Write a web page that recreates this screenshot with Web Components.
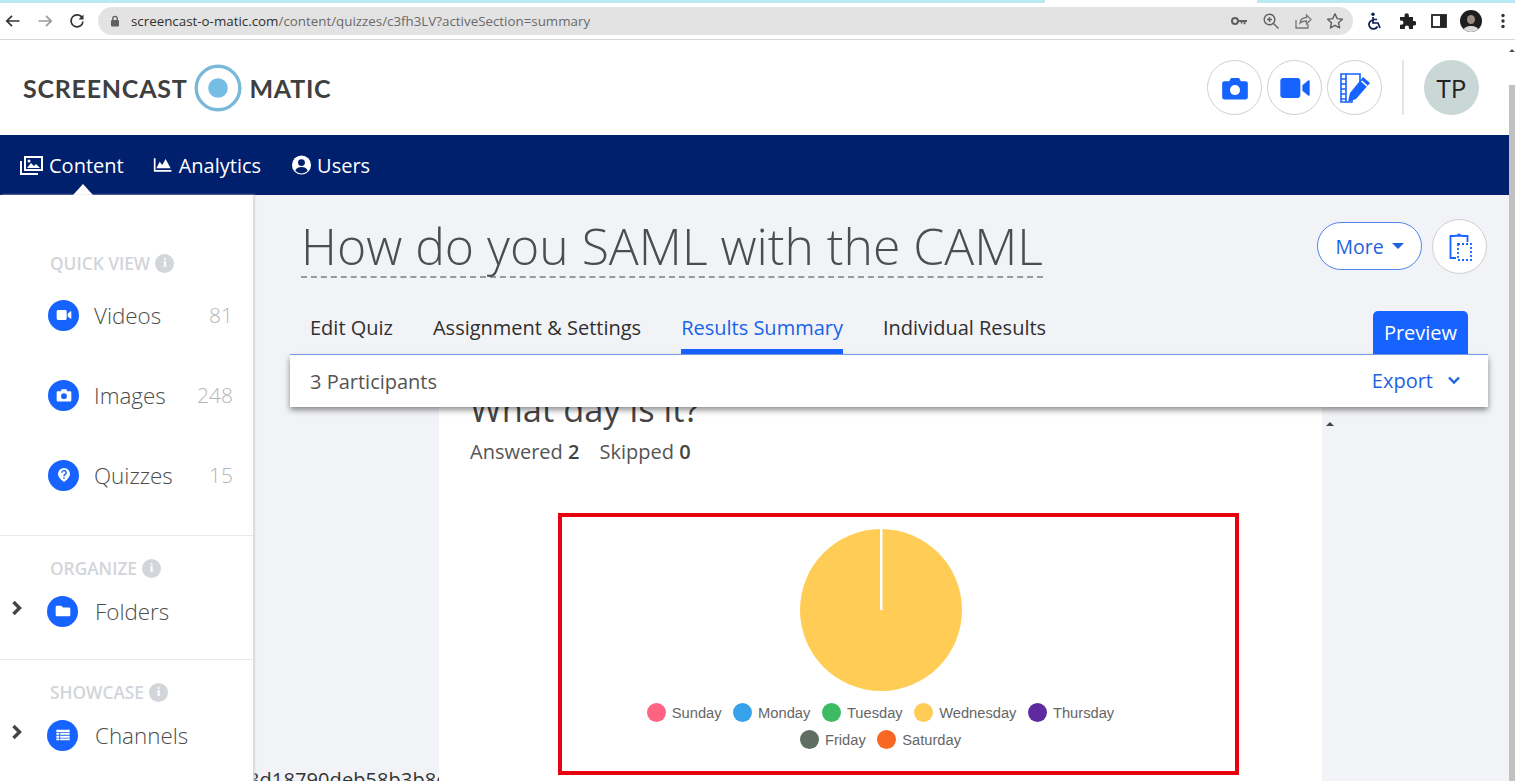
<!DOCTYPE html>
<html>
<head>
<meta charset="utf-8">
<title>How do you SAML with the CAML</title>
<style>
html, body {
  margin: 0;
  height: 781px;
  overflow: hidden;
  background: #fff;
  font-family: "Open Sans", sans-serif;
}
body {
  display: flex;
  flex-direction: column;
}
.page {
  flex: 1;
  display: flex;
  min-height: 0;
}
.page-inner {
  flex: 1;
  min-width: 0;
  display: flex;
  flex-direction: column;
}
.work {
  flex: 1;
  display: flex;
  min-height: 0;
}
</style>
</head>
<body>
<browser-bar></browser-bar>
<div class="page">
  <div class="page-inner">
    <site-header></site-header>
    <site-nav></site-nav>
    <div class="work">
      <side-bar></side-bar>
      <quiz-main></quiz-main>
    </div>
  </div>
  <page-scrollbar></page-scrollbar>
</div>

<script>
var icons = {
  camera: `<svg viewBox="0 0 24 24"><path fill="currentColor" d="M8.500 3.500h7l1.500 2.700h4.200A1.800 1.800 0 0 1 23 8v12a1.800 1.800 0 0 1-1.800 1.800H2.800A1.800 1.800 0 0 1 1 20V8a1.800 1.800 0 0 1 1.800-1.800H7z"/><circle cx="12" cy="13.800" r="4.300" fill="var(--cut,#fff)"/></svg>`,
  video: `<svg viewBox="0 0 24 24"><rect x="1" y="4.500" width="15" height="15" rx="2.200" fill="currentColor"/><path fill="currentColor" d="M17.500 10l4.300-3.600c.5-.4 1.200 0 1.200.6v10c0 .6-.7 1-1.200.6L17.500 14z"/></svg>`,
  quiz: `<svg viewBox="0 0 24 24"><path fill="currentColor" d="M12 1.500a9 9 0 0 0-9 9c0 4.600 5.500 9.800 9 12 3.500-2.200 9-7.400 9-12a9 9 0 0 0-9-9z"/><path fill="none" stroke="var(--cut,#fff)" stroke-width="2.200" d="M8.800 8.600a3.200 3.200 0 1 1 4.600 2.900c-1 .5-1.400 1-1.400 2.200"/><circle cx="12" cy="16.500" r="1.300" fill="var(--cut,#fff)"/></svg>`,
  folder: `<svg viewBox="0 0 24 24"><path fill="currentColor" d="M3 4h6.500l2.500 2.800h9A2 2 0 0 1 23 8.800V18a2 2 0 0 1-2 2H3a2 2 0 0 1-2-2V6a2 2 0 0 1 2-2z"/></svg>`,
  list: `<svg viewBox="0 0 24 24"><path fill="currentColor" d="M2 4h20v3.500H2zM2 8.800h4.500v3H2zM7.800 8.800H22v3H7.800zM2 13h4.500v3H2zM7.800 13H22v3H7.800zM2 17.200h4.500V20H2zM7.800 17.200H22V20H7.800z"/></svg>`
};

// plain icon wrapper, the name picks from the table above
class SvgIcon extends HTMLElement {
  constructor() {
    super();
    var size = this.getAttribute("size") || 16;
    var root = this.attachShadow({ mode: "open" });
    root.innerHTML = `
<style>
:host { display: inline-flex; width: ${size}px; height: ${size}px; flex: none; }
svg { width: 100%; height: 100%; display: block; }
</style>${icons[this.getAttribute("name")] || ""}`;
  }
}
customElements.define("svg-icon", SvgIcon);

class BrowserBar extends HTMLElement {
  constructor() {
    super();
    this.attachShadow({ mode: "open" }).innerHTML = `
<style>
:host { display: block; flex: none; height: 40px; background: #fff; box-sizing: border-box; border-bottom: 1px solid #d8d8d8; }
.strip { display: flex; height: 3px; }
.strip i { display: block; background: #b9e9f3; }
.toolbar { display: flex; align-items: center; height: 32px; margin-top: 2px; }
.nav { display: flex; width: 98px; flex: none; }
.nav svg { width: 18px; height: 18px; display: block; }
.nav span { width: 32px; display: flex; justify-content: center; }
.nav span:first-child { margin-left: -3px; }
.omni { width: 1255px; height: 28px; flex: none; background: #e3e3e3; border-radius: 14px; display: flex; align-items: center; box-sizing: border-box; padding-left: 12px; font: 13.350px "Open Sans", sans-serif; color: #6a6a6a; }
.omni svg { display: block; }
.omni b { font-weight: 400; color: #303030; }
.url { margin-left: 11px; white-space: nowrap; flex: 1; }
.tools { display: flex; align-items: center; gap: 14px; padding-right: 9px; }
.tools svg { width: 18px; height: 18px; display: block; }
.ext { display: flex; align-items: center; }
.ext > * { width: 32px; display: flex; justify-content: center; }
.ext svg { width: 18px; height: 18px; display: block; }
.ext { margin-left: 6px; }
.face { width: 22px; height: 22px; border-radius: 50%; background: #1e1e1e; position: relative; overflow: hidden; display: block; }
.face::after { content: ""; position: absolute; left: 3px; right: 3px; bottom: -4px; height: 10px; border-radius: 50%; background: #d8d8d8; }
.face::before { content: ""; position: absolute; left: 7px; top: 5px; width: 8px; height: 9px; border-radius: 50%; background: #9a8c80; }
</style>
<div class="strip"><i style="width:1045px"></i><span style="width:212px"></span><i style="flex:1"></i></div>
<div class="toolbar">
  <div class="nav">
    <span><svg viewBox="0 0 18 18"><path fill="none" stroke="#333" stroke-width="1.700" d="M15.500 9H3M8 3.800L2.800 9 8 14.200"/></svg></span>
    <span><svg viewBox="0 0 18 18"><path fill="none" stroke="#9a9a9a" stroke-width="1.700" d="M2.500 9H15M10 3.800L15.200 9 10 14.200"/></svg></span>
    <span><svg viewBox="0 0 18 18"><path fill="none" stroke="#333" stroke-width="1.700" d="M14.300 6A6 6 0 1 0 15 9.500"/><path fill="#333" d="M15.500 2.500v5h-5z"/></svg></span>
  </div>
  <div class="omni">
    <svg width="10" height="12" viewBox="0 0 10 12"><rect x="1" y="5" width="8" height="6.500" rx="1" fill="#5f5f5f"/><path fill="none" stroke="#5f5f5f" stroke-width="1.300" d="M2.800 5.500V3.500a2.200 2.200 0 0 1 4.400 0v2"/></svg>
    <span class="url"><b>screencast-o-matic.com</b>/content/quizzes/c3fh3LV?activeSection=summary</span>
    <div class="tools">
      <svg viewBox="0 0 18 18"><circle cx="5" cy="9" r="3" fill="none" stroke="#5f5f5f" stroke-width="2"/><path fill="#5f5f5f" d="M8 8h9v2h-1.500v2.200h-1.800V10h-1.200v1.500h-1.800V10H8z"/></svg>
      <svg viewBox="0 0 18 18"><circle cx="7.500" cy="7.500" r="5.300" fill="none" stroke="#5f5f5f" stroke-width="1.400"/><path stroke="#5f5f5f" stroke-width="1.400" fill="none" d="M11.500 11.500l5 5M7.500 5v5M5 7.500h5"/></svg>
      <svg viewBox="0 0 18 18"><path fill="none" stroke="#777" stroke-width="1.300" d="M2 8v8h12v-4M6 11c.5-3.500 3-5.500 6.500-5.500V3l4.500 4.500-4.500 4.500V9c-3 0-5 .5-6.500 2z"/></svg>
      <svg viewBox="0 0 18 18"><path fill="none" stroke="#5f5f5f" stroke-width="1.400" stroke-linejoin="round" d="M9 1.800l2.200 4.800 5.200.6-3.900 3.500 1.100 5.200L9 13.300l-4.600 2.600 1.100-5.200-3.900-3.500 5.200-.6z"/></svg>
    </div>
  </div>
  <div class="ext">
    <span><svg viewBox="0 0 18 18"><circle cx="7" cy="2.300" r="1.700" fill="#0b1a52"/><path fill="none" stroke="#0b1a52" stroke-width="1.700" d="M7 5v6h5l2 5M6 8.200a4.500 4.500 0 1 0 5.500 6.300M7 7.500h4"/></svg></span>
    <span><svg viewBox="0 0 18 18"><path fill="#222" d="M6.500 3.500a2.200 2.200 0 1 1 4.400 0V5H15v4h1.200a2.200 2.200 0 1 1 0 4.400H15V17h-4v-1.300a2.100 2.100 0 1 0-4.200 0V17H2v-4.200h1.300a2.200 2.200 0 1 0 0-4.400H2V5h4.500z"/></svg></span>
    <span><svg viewBox="0 0 18 18"><rect x="2" y="3" width="14" height="12" fill="none" stroke="#222" stroke-width="1.800"/><rect x="10" y="3" width="6" height="12" fill="#222"/></svg></span>
    <span><i class="face"></i></span>
    <span><svg viewBox="0 0 18 18"><circle cx="9" cy="3.500" r="1.700" fill="#333"/><circle cx="9" cy="9" r="1.700" fill="#333"/><circle cx="9" cy="14.500" r="1.700" fill="#333"/></svg></span>
  </div>
</div>`;
  }
}
customElements.define("browser-bar", BrowserBar);

class SiteHeader extends HTMLElement {
  constructor() {
    super();
    this.attachShadow({ mode: "open" }).innerHTML = `
<style>
:host { display: flex; flex: none; height: 95px; align-items: center; background: #fff; padding: 0 30px 0 23px; box-sizing: border-box; }
.logo { display: flex; align-items: center; gap: 7px; font: 700 25px Lato, sans-serif; color: #3f3f3f; letter-spacing: .75px; }
.logo svg { width: 48px; height: 48px; display: block; }
.actions { margin-left: auto; display: flex; align-items: center; gap: 5px; }
.round { width: 55px; height: 55px; box-sizing: border-box; border: 1px solid #cfcfcf; border-radius: 50%; display: flex; align-items: center; justify-content: center; background: #fff; color: #1763ff; }
.sep { width: 2px; height: 55px; background: #e4e6e6; margin: 0 15px; }
.avatar { width: 55px; height: 55px; border-radius: 50%; background: #c9d8d6; color: #222; display: flex; align-items: center; justify-content: center; font: 400 26px "Open Sans", sans-serif; }
</style>
<div class="logo">
  <span>SCREENCAST</span>
  <svg viewBox="0 0 48 48"><circle cx="24" cy="24" r="21.800" fill="none" stroke="#79b8d9" stroke-width="3.400"/><circle cx="24" cy="24" r="9.800" fill="#76bde6"/></svg>
  <span>MATIC</span>
</div>
<div class="actions">
  <div class="round"><svg-icon name="camera" size="28"></svg-icon></div>
  <div class="round"><svg-icon name="video" size="32"></svg-icon></div>
  <div class="round">
    <svg width="34" height="34" viewBox="0 0 34 34"><path fill="none" stroke="#1763ff" stroke-width="1.600" d="M3 3h19v10l-8 9v9H3zM8 3v28M3 8h5M3 13h5M3 18h5M3 23h5M3 28h5"/><path fill="#1763ff" d="M25 6l7 6-14 16-8 3 2-9z"/><path fill="#fff" d="M23 10.500l1.200-1 5.500 5-1 1.200z"/></svg>
  </div>
  <div class="sep"></div>
  <div class="avatar">TP</div>
</div>`;
  }
}
customElements.define("site-header", SiteHeader);

class SiteNav extends HTMLElement {
  constructor() {
    super();
    this.attachShadow({ mode: "open" }).innerHTML = `
<style>
:host { display: flex; flex: none; height: 60px; background: #001f6d; color: #fff; align-items: center; padding-left: 19px; gap: 29px; font: 400 20px "Open Sans", sans-serif; position: relative; }
a { display: flex; align-items: center; gap: 5px; }
svg { display: block; width: 25px; height: 22px; }
.notch { position: absolute; left: 73px; bottom: 0; width: 0; height: 0; border: 10px solid transparent; border-top: 0; border-bottom: 11px solid #fff; }
</style>
<a><svg viewBox="0 0 25 22"><path fill="none" stroke="#fff" stroke-width="2" d="M6 3h17v13H6zM2 7v13h17"/><path fill="#fff" d="M8 14l4-5 3 3 2-2 4 4z"/><circle cx="10" cy="7" r="1.500" fill="#fff"/></svg>Content</a>
<a><svg viewBox="0 0 25 22" style="width:21px"><path fill="#fff" d="M1 3h2v14h19v2H1zM4 15l4-8 3 4 4-7 6 11z"/></svg>Analytics</a>
<a style="margin-left:1px"><svg viewBox="0 0 22 22" style="width:21px"><circle cx="11" cy="11" r="10" fill="#fff"/><circle cx="11" cy="8.500" r="3.600" fill="#001f6d"/><path fill="#001f6d" d="M4.500 17c1-3 3.500-4 6.500-4s5.500 1 6.500 4a9 9 0 0 1-13 0z"/></svg>Users</a>
<i class="notch"></i>`;
  }
}
customElements.define("site-nav", SiteNav);

class SideSection extends HTMLElement {
  constructor() {
    super();
    this.attachShadow({ mode: "open" }).innerHTML = `
<style>
:host { display: block; box-sizing: border-box; padding-left: 50px; height: var(--h, 124px); padding-top: var(--pt, 21px); border-bottom: var(--bb, 1px solid #e9e9ec); }
.head { display: flex; align-items: center; gap: 5px; height: 24px; font: 600 17.300px "Open Sans", sans-serif; color: #d2d5d9; }
.info { width: 19px; height: 19px; border-radius: 50%; background: #d2d5d9; color: #fff; font: 700 13px "Liberation Serif", serif; display: flex; align-items: center; justify-content: center; }
</style>
<div class="head"><span>${this.getAttribute("label")}</span><span class="info">i</span></div>
<slot></slot>`;
  }
}
customElements.define("side-section", SideSection);

class SideItem extends HTMLElement {
  constructor() {
    super();
    var count = this.getAttribute("count");
    var caret = this.hasAttribute("caret");
    this.attachShadow({ mode: "open" }).innerHTML = `
<style>
:host { display: flex; align-items: center; height: 80px; font: 300 22.400px "Open Sans", sans-serif; color: #4c4c4c; position: relative; margin-left: var(--ml, -2px); }
.dot { width: 31px; height: 31px; border-radius: 50%; background: #1763ff; color: #fff; display: flex; align-items: center; justify-content: center; --cut: #1763ff; margin-right: var(--dm, 15px); flex: none; }
.count { margin-left: auto; margin-right: 20px; color: #b5b5b5; font-size: 21px; }
.caret { position: absolute; left: -36px; top: 50%; margin-top: -11px; }
</style>
${caret ? `<svg class="caret" width="12" height="16" viewBox="0 0 12 16"><path fill="none" stroke="#444" stroke-width="3.400" d="M2.500 2l6 6-6 6"/></svg>` : ""}
<span class="dot"><svg-icon name="${this.getAttribute("icon")}" size="16"></svg-icon></span>
<span>${this.getAttribute("label")}</span>
${count ? `<span class="count">${count}</span>` : ""}`;
  }
}
customElements.define("side-item", SideItem);

class SideBar extends HTMLElement {
  constructor() {
    super();
    this.attachShadow({ mode: "open" }).innerHTML = `
<style>
:host { display: block; flex: none; width: 253px; background: #fff; box-shadow: 2px 0 2px #d8d9dc; position: relative; z-index: 3; overflow: hidden; }
.quick { --h: 341px; --pt: 56px; }
.org { --pt: 20px; --ml: -3px; --dm: 17px; }
.show { --bb: none; --ml: -3px; --dm: 17px; --pt: 20px; }
.org side-item, .show side-item { height: 60px; margin-top: 1px; }
</style>
<side-section class="quick" label="QUICK VIEW">
  <side-item icon="video" label="Videos" count="81"></side-item>
  <side-item icon="camera" label="Images" count="248"></side-item>
  <side-item icon="quiz" label="Quizzes" count="15"></side-item>
</side-section>
<side-section class="org" label="ORGANIZE">
  <side-item icon="folder" label="Folders" caret></side-item>
</side-section>
<side-section class="show" label="SHOWCASE">
  <side-item icon="list" label="Channels" caret></side-item>
</side-section>`;
  }
}
customElements.define("side-bar", SideBar);

class TabStrip extends HTMLElement {
  constructor() {
    super();
    this.attachShadow({ mode: "open" }).innerHTML = `
<style>
:host { display: flex; align-items: flex-end; height: 45px; box-sizing: content-box; border-bottom: 1px solid #7ba4ee; padding-left: 20px; font: 400 20px "Open Sans", sans-serif; color: #2f2f2f; }
.tab { height: 40px; box-sizing: border-box; margin-right: 40px; white-space: nowrap; line-height: 27px; }
.on { color: #1763e8; border-bottom: 5px solid #1763ff; }
.preview { margin-left: auto; margin-right: 20px; width: 95px; height: 43px; box-sizing: border-box; background: #1763ff; color: #fff; border-radius: 5px 5px 0 0; text-align: center; line-height: 43px; }
</style>
<div class="tab">Edit Quiz</div>
<div class="tab">Assignment &amp; Settings</div>
<div class="tab on">Results Summary</div>
<div class="tab">Individual Results</div>
<div class="preview">Preview</div>`;
  }
}
customElements.define("tab-strip", TabStrip);

class LegendItem extends HTMLElement {
  constructor() {
    super();
    this.attachShadow({ mode: "open" }).innerHTML = `
<style>
:host { display: inline-flex; align-items: center; gap: 6px; height: 19px; font: 14.700px "Liberation Sans", sans-serif; color: #666; }
i { width: 19px; height: 19px; border-radius: 50%; background: ${this.getAttribute("color")}; display: block; }
</style>
<i></i><slot></slot>`;
  }
}
customElements.define("legend-item", LegendItem);

class PieChart extends HTMLElement {
  constructor() {
    super();
    this.attachShadow({ mode: "open" }).innerHTML = `
<style>
:host { display: block; width: 681px; height: 262px; box-sizing: border-box; border: 4px solid #e8000f; padding: 12px 36px 0 0; }
svg { display: block; margin: 0 auto; width: 162px; height: 162px; }
.legend { display: flex; flex-direction: column; gap: 8px; margin-top: 12px; }
.row { display: flex; justify-content: center; gap: 11.500px; }
</style>
<svg viewBox="0 0 162 162"><circle cx="81" cy="81" r="81" fill="#ffcd56"/><rect x="80" y="0" width="2.500" height="81" fill="#fff"/></svg>
<div class="legend">
  <div class="row">
    <legend-item color="#ff6384">Sunday</legend-item>
    <legend-item color="#36a2eb">Monday</legend-item>
    <legend-item color="#3cba64">Tuesday</legend-item>
    <legend-item color="#ffcd56">Wednesday</legend-item>
    <legend-item color="#5f2a9d">Thursday</legend-item>
  </div>
  <div class="row">
    <legend-item color="#5e6e60">Friday</legend-item>
    <legend-item color="#f96724">Saturday</legend-item>
  </div>
</div>`;
  }
}
customElements.define("pie-chart", PieChart);

class QuizMain extends HTMLElement {
  constructor() {
    super();
    this.attachShadow({ mode: "open" }).innerHTML = `
<style>
:host { flex: 1; min-width: 0; display: flex; flex-direction: column; background: #f2f3f7; overflow: hidden; position: relative; }
.top { display: flex; align-items: flex-start; height: 114px; flex: none; padding: 0 22px 0 48px; box-sizing: border-box; }
h1 { margin: 22px 0 0; font: 300 49.900px/58px "Open Sans", sans-serif; color: #4a4d52; border-bottom: 2px dashed #9a9a9a; white-space: nowrap; height: 59px; }
.btns { margin-left: auto; display: flex; align-items: center; gap: 10px; margin-top: 24px; }
.more { width: 105px; height: 48px; margin-top: -1px; box-sizing: border-box; border: 1px solid #4f86ea; border-radius: 24px; background: #fff; color: #1f62e0; display: flex; align-items: center; justify-content: center; gap: 8px; font-size: 19.500px; }
.more i { width: 0; height: 0; border: 6px solid transparent; border-top: 6px solid #1f62e0; border-bottom: 0; }
.clip { width: 55px; height: 55px; box-sizing: border-box; border: 1px solid #cfcfcf; border-radius: 50%; background: #fff; display: flex; align-items: center; justify-content: center; }
.tabs { margin: 0 21px 0 37px; flex: none; }
.bar { margin: 0 21px 0 37px; height: 52px; flex: none; background: #fff; box-shadow: 0 3px 6px rgba(0,0,0,.45); display: flex; align-items: center; justify-content: space-between; padding: 0 27px 0 20px; font-size: 20px; color: #555; position: relative; z-index: 2; }
.export { color: #1f62e0; display: flex; align-items: center; gap: 14px; margin-top: -2px; }
.lower { flex: 1; display: flex; min-height: 0; }
.cut { width: 186px; flex: none; display: flex; flex-direction: column; justify-content: flex-end; overflow: hidden; }
.cut span { font-size: 20px; line-height: 20px; color: #333; white-space: nowrap; margin-left: -5px; margin-bottom: -9px; letter-spacing: .1px; }
.card { width: 883px; flex: none; background: #fff; box-sizing: border-box; padding: 0 0 0 31px; overflow: hidden; }
.q { font-size: 34.400px; line-height: 34px; color: #444; margin-top: -15px; white-space: nowrap; }
.counts { font-size: 20px; line-height: 26px; color: #555; margin-top: 13px; display: flex; gap: 20px; }
.counts b { font-weight: 600; color: #444; }
pie-chart { margin: 48px 0 0 88px; }
.rail { width: 16px; flex: none; display: flex; justify-content: center; padding-top: 15px; box-sizing: border-box; }
.rail i { width: 0; height: 0; border: 4px solid transparent; border-top: 0; border-bottom: 4px solid #444; }
</style>
<div class="top">
  <h1>How do you SAML with the CAML</h1>
  <div class="btns">
    <div class="more">More <i></i></div>
    <div class="clip"><svg width="26" height="30" viewBox="0 0 26 30"><path fill="none" stroke="#1763ff" stroke-width="1.800" d="M8 4H3.500v22H9"/><path fill="none" stroke="#1763ff" stroke-width="1.800" d="M16 4h4.500v6"/><path fill="#1763ff" d="M8 4.800h8V2.800h-2.300a1.800 1.800 0 0 0-3.400 0H8z"/><path fill="none" stroke="#1763ff" stroke-width="1.800" stroke-dasharray="2 2" d="M11 12h13v16H11z"/></svg></div>
  </div>
</div>
<tab-strip class="tabs"></tab-strip>
<div class="bar">
  <span>3 Participants</span>
  <span class="export">Export <svg width="14" height="9" viewBox="0 0 14 9"><path fill="none" stroke="#1f62e0" stroke-width="2.400" d="M2 1.500l5 5 5-5"/></svg></span>
</div>
<div class="lower">
  <div class="cut"><span>3d18790deb58b3b8c</span></div>
  <div class="card">
    <div class="q">What day is it?</div>
    <div class="counts"><span>Answered <b>2</b></span><span>Skipped <b>0</b></span></div>
    <pie-chart></pie-chart>
  </div>
  <div class="rail"><i></i></div>
</div>`;
  }
}
customElements.define("quiz-main", QuizMain);

class PageScrollbar extends HTMLElement {
  constructor() {
    super();
    this.attachShadow({ mode: "open" }).innerHTML = `
<style>
:host { display: flex; flex-direction: column; flex: none; width: 6px; background: #f1f1f1; }
.up { height: 45px; background: #fff; display: flex; justify-content: center; padding-top: 9px; box-sizing: border-box; }
.up i { width: 0; height: 0; border: 3px solid transparent; border-top: 0; border-bottom: 3px solid #555; }
.thumb { flex: 1; background: #c1c1c1; }
</style>
<div class="up"><i></i></div><div class="thumb"></div>`;
  }
}
customElements.define("page-scrollbar", PageScrollbar);
</script>
</body>
</html>
